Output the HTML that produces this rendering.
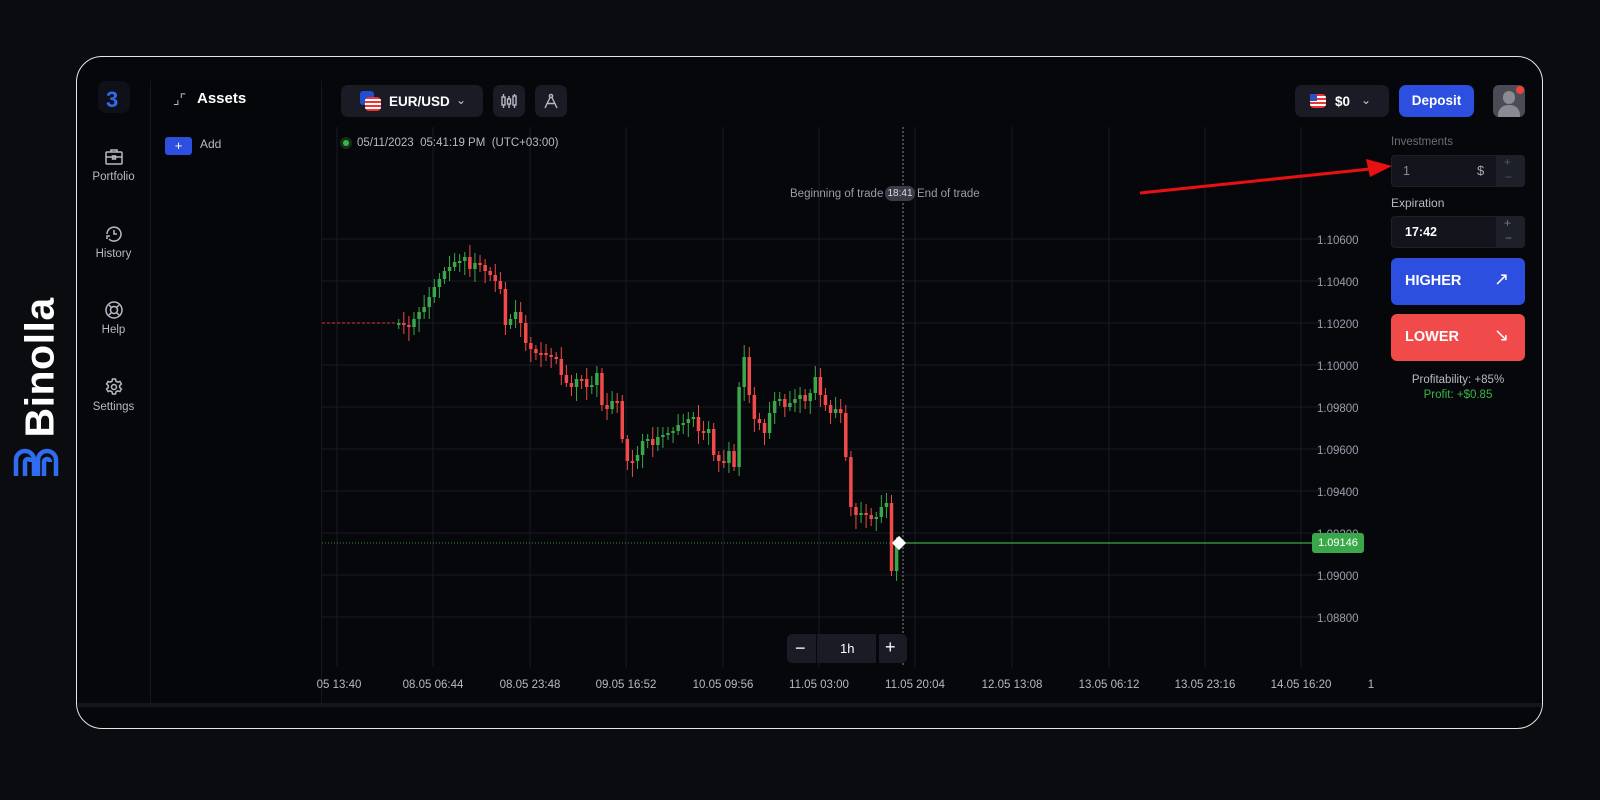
<!DOCTYPE html>
<html><head><meta charset="utf-8"><style>
*{margin:0;padding:0;box-sizing:border-box}
body{width:1600px;height:800px;background:#0b0c10;font-family:"Liberation Sans",sans-serif;color:#c9ccd6;position:relative;overflow:hidden}
.frame{position:absolute;left:76px;top:56px;width:1467px;height:673px;border:1.5px solid #e6e6e6;border-radius:26px;background:#06070b;overflow:hidden}
.abs{position:absolute}
.side{left:0;top:0;width:73px;height:100%;}
.nav{position:absolute;left:0;width:73px;text-align:center;font-size:11.5px;color:#b7bac4}
.nav svg{display:block;margin:0 auto 4px}
.btn{background:#1a1b24;border-radius:7px}
.grid{stroke:#181a24;stroke-width:1}
.yl{position:absolute;left:1240px;font-size:11.5px;color:#9a9da8}
.xl{position:absolute;top:622px;font-size:11.5px;color:#b7bac4;transform:translateX(-50%);white-space:nowrap}
</style></head><body>
<div class="abs" style="left:20px;top:300px;width:40px;height:140px;">
<div style="position:absolute;left:-48px;top:46px;width:136px;transform:rotate(-90deg);font-size:41px;font-weight:bold;color:#fff;letter-spacing:0.5px">Binolla</div>
</div>
<svg class="abs" style="left:12px;top:446px" width="48" height="32" viewBox="0 0 48 32"><path d="M4 30V14a9 9 0 0 1 18 0v16M13 30V16a3 3 0 0 1 6 0M26 30V14a9 9 0 0 1 18 0v16M32 30V16a3 3 0 0 1 6 0" fill="none" stroke="#2f6cf0" stroke-width="4.5"/></svg>

<div class="frame">
 <div class="abs side">
  <div class="abs" style="left:21px;top:24px;width:32px;height:32px;border-radius:8px;background:#0f1018"></div>
  <div class="abs" style="left:29px;top:30px;font-size:22px;font-weight:bold;color:#2f6cf0">3</div>
  <div class="nav" style="top:90px"><svg width="20" height="20" viewBox="0 0 20 20" fill="none" stroke="#b7bac4" stroke-width="1.5"><rect x="2" y="5" width="16" height="12" rx="1"/><path d="M7 5V3h6v2M2 10h16"/><rect x="8.5" y="9" width="3" height="3"/></svg>Portfolio</div>
  <div class="nav" style="top:167px"><svg width="20" height="20" viewBox="0 0 20 20" fill="none" stroke="#b7bac4" stroke-width="1.5"><path d="M3 10a7 7 0 1 1 2 5M3 15v-3h3"/><path d="M10 6v4h3"/></svg>History</div>
  <div class="nav" style="top:243px"><svg width="20" height="20" viewBox="0 0 20 20" fill="none" stroke="#b7bac4" stroke-width="1.5"><circle cx="10" cy="10" r="8"/><circle cx="10" cy="10" r="3.5"/><path d="M5 5l2.5 2.5M15 5l-2.5 2.5M5 15l2.5-2.5M15 15l-2.5-2.5"/></svg>Help</div>
  <div class="nav" style="top:320px"><svg width="20" height="20" viewBox="0 0 20 20" fill="none" stroke="#b7bac4" stroke-width="1.5"><path d="M8.5 2h3l.5 2.2 1.8 1 2.1-.8 1.5 2.6-1.7 1.5v2l1.7 1.5-1.5 2.6-2.1-.8-1.8 1-.5 2.2h-3l-.5-2.2-1.8-1-2.1.8-1.5-2.6 1.7-1.5v-2L2.6 7l1.5-2.6 2.1.8 1.8-1z"/><circle cx="10" cy="10" r="2.5"/></svg>Settings</div>
 </div>
 <div class="abs" style="left:73px;top:24px;width:1px;height:625px;background:#15161e"></div>
 <div class="abs" style="left:74px;top:24px;width:170px;height:625px;background:#050609"></div>
 <div class="abs" style="left:96px;top:34px;color:#b7bac4;font-size:14px">⌟⌜</div>
 <div class="abs" style="left:120px;top:33px;font-size:15px;font-weight:bold;color:#fff">Assets</div>
 <div class="abs" style="left:88px;top:80px;width:27px;height:18px;border-radius:3px;background:#2d4fe0;color:#fff;text-align:center;font-size:13px;line-height:18px">+</div>
 <div class="abs" style="left:123px;top:80px;font-size:12px;color:#b7bac4">Add</div>
 <div class="abs" style="left:244px;top:24px;width:1px;height:625px;background:#15161e"></div>

 <svg class="abs" style="left:0;top:0" width="1467" height="673" id="ch">
  <g class="grid">
   <line x1="260" y1="70" x2="260" y2="610"/>
   <line x1="356" y1="70" x2="356" y2="610"/><line x1="453" y1="70" x2="453" y2="610"/><line x1="549" y1="70" x2="549" y2="610"/><line x1="646" y1="70" x2="646" y2="610"/><line x1="742" y1="70" x2="742" y2="610"/><line x1="838" y1="70" x2="838" y2="610"/><line x1="935" y1="70" x2="935" y2="610"/><line x1="1032" y1="70" x2="1032" y2="610"/><line x1="1128" y1="70" x2="1128" y2="610"/><line x1="1224" y1="70" x2="1224" y2="610"/>
   <line x1="245" y1="182" x2="1280" y2="182"/><line x1="245" y1="224" x2="1280" y2="224"/><line x1="245" y1="266" x2="1280" y2="266"/><line x1="245" y1="308" x2="1280" y2="308"/><line x1="245" y1="350" x2="1280" y2="350"/><line x1="245" y1="392" x2="1280" y2="392"/><line x1="245" y1="434" x2="1280" y2="434"/><line x1="245" y1="476" x2="1280" y2="476"/><line x1="245" y1="518" x2="1280" y2="518"/><line x1="245" y1="560" x2="1280" y2="560"/>
  </g>
  <line x1="245" y1="266" x2="320" y2="266" stroke="#d33" stroke-dasharray="3 2"/>
  <line x1="245" y1="486" x2="822" y2="486" stroke="#3a8a3a" stroke-dasharray="1 2"/>
  <line x1="822" y1="486" x2="1240" y2="486" stroke="#3aa84a" stroke-width="1.2"/>
  <line x1="826" y1="70" x2="826" y2="610" stroke="#888" stroke-dasharray="2 2"/>
  <g id="cd"></g>
  <rect x="817" y="481" width="10" height="10" fill="#fff" transform="rotate(45 822 486)"/>
  <rect x="0" y="646" width="1467" height="4" fill="#14151d"/>
 </svg>
 <div class="abs" style="left:808px;top:129px;width:30px;height:15px;border-radius:7px;background:#3a3c48;font-size:10px;color:#ddd;text-align:center;line-height:15px">18:41</div>
 <div class="abs" style="left:713px;top:131px;font-size:11.5px;color:#9a9da8">Beginning of trade</div>
 <div class="abs" style="left:840px;top:131px;font-size:11.5px;color:#9a9da8">End of trade</div>
 <div class="abs" style="left:266px;top:80px;font-size:11.5px;color:#b7bac4"><span style="display:inline-block;width:6px;height:6px;border-radius:3px;background:#3ab54a;margin-right:8px;box-shadow:0 0 0 3px #12301a"></span>05/11/2023&nbsp; 05:41:19 PM&nbsp; (UTC+03:00)</div>
 <div class="yl" style="top:178px">1.10600</div><div class="yl" style="top:220px">1.10400</div><div class="yl" style="top:262px">1.10200</div><div class="yl" style="top:304px">1.10000</div><div class="yl" style="top:346px">1.09800</div><div class="yl" style="top:388px">1.09600</div><div class="yl" style="top:430px">1.09400</div><div class="yl" style="top:472px">1.09200</div><div class="yl" style="top:514px">1.09000</div><div class="yl" style="top:556px">1.08800</div>
 <div class="abs" style="left:1235px;top:476px;width:52px;height:20px;border-radius:3px;background:#3aa84a;color:#fff;font-size:11px;text-align:center;line-height:20px">1.09146</div>
 <div class="xl" style="left:262px">05 13:40</div><div class="xl" style="left:356px">08.05 06:44</div><div class="xl" style="left:453px">08.05 23:48</div><div class="xl" style="left:549px">09.05 16:52</div><div class="xl" style="left:646px">10.05 09:56</div><div class="xl" style="left:742px">11.05 03:00</div><div class="xl" style="left:838px">11.05 20:04</div><div class="xl" style="left:935px">12.05 13:08</div><div class="xl" style="left:1032px">13.05 06:12</div><div class="xl" style="left:1128px">13.05 23:16</div><div class="xl" style="left:1224px">14.05 16:20</div><div class="xl" style="left:1294px">1</div>
 <div class="abs btn" style="left:710px;top:577px;width:120px;height:29px;border-radius:5px"></div>
 <div class="abs" style="left:739px;top:577px;width:1px;height:29px;background:#06070b"></div>
 <div class="abs" style="left:799px;top:577px;width:3px;height:29px;background:#06070b"></div>
 <div class="abs" style="left:718px;top:581px;font-size:18px;color:#fff">−</div>
 <div class="abs" style="left:763px;top:584px;font-size:13px;color:#fff">1h</div>
 <div class="abs" style="left:808px;top:580px;font-size:18px;color:#fff">+</div>

 <div class="abs btn" style="left:264px;top:28px;width:142px;height:32px"></div>
 <div class="abs" style="left:283px;top:34px;width:14px;height:14px;border-radius:3px;background:#1f4fd0"></div>
 <div class="abs" style="left:288px;top:40px;width:16px;height:14px;border-radius:4px;background:repeating-linear-gradient(#e33 0 2px,#fff 2px 4px)"></div>
 <div class="abs" style="left:312px;top:37px;font-size:13.5px;font-weight:bold;color:#fff">EUR/USD</div>
 <div class="abs" style="left:379px;top:36px;font-size:12px;color:#ccc">⌄</div>
 <div class="abs btn" style="left:416px;top:28px;width:32px;height:32px"></div>
 <svg class="abs" style="left:423px;top:35px" width="18" height="18" viewBox="0 0 18 18" fill="none" stroke="#b7bac4" stroke-width="1.4"><rect x="2" y="5" width="3" height="8"/><rect x="7.5" y="7" width="3" height="5"/><rect x="13" y="4" width="3" height="9"/><path d="M3.5 2v3M3.5 13v3M9 4v3M9 12v4M14.5 2v2M14.5 13v3"/></svg>
 <div class="abs btn" style="left:458px;top:28px;width:32px;height:32px"></div>
 <svg class="abs" style="left:465px;top:35px" width="18" height="18" viewBox="0 0 18 18" fill="none" stroke="#b7bac4" stroke-width="1.4"><circle cx="9" cy="4" r="1.6"/><path d="M8 5.5L3 16M10 5.5L15 16M4.5 11.5h9"/></svg>
 <div class="abs btn" style="left:1218px;top:28px;width:94px;height:32px"></div>
 <div class="abs" style="left:1233px;top:37px;width:16px;height:14px;border-radius:4px;background:repeating-linear-gradient(#e33 0 2px,#fff 2px 4px)"></div>
 <div class="abs" style="left:1233px;top:37px;width:7px;height:7px;background:#3050c0"></div>
 <div class="abs" style="left:1258px;top:37px;font-size:13.5px;font-weight:bold;color:#fff">$0</div>
 <div class="abs" style="left:1284px;top:36px;font-size:12px;color:#ccc">⌄</div>
 <div class="abs" style="left:1322px;top:28px;width:75px;height:32px;border-radius:7px;background:#2d4fe0;color:#fff;font-size:13.5px;font-weight:bold;text-align:center;line-height:32px">Deposit</div>
 <div class="abs" style="left:1416px;top:28px;width:32px;height:32px;border-radius:6px;background:#4a4b55;overflow:hidden"><div style="position:absolute;left:10px;top:6px;width:12px;height:13px;border-radius:6px;background:#8a8b92"></div><div style="position:absolute;left:5px;top:20px;width:22px;height:14px;border-radius:10px 10px 0 0;background:#8a8b92"></div></div>
 <div class="abs" style="left:1439px;top:29px;width:8px;height:8px;border-radius:4px;background:#f04040"></div>

 <div class="abs" style="left:1314px;top:79px;font-size:11.5px;color:#6a6d78">Investments</div>
 <div class="abs" style="left:1314px;top:98px;width:134px;height:32px;border-radius:4px;background:#13141c;border:1px solid #1e2029"></div>
 <div class="abs" style="left:1419px;top:98px;width:29px;height:32px;background:#1e2029;border-radius:0 4px 4px 0"></div>
 <div class="abs" style="left:1427px;top:98px;font-size:12px;color:#555">+</div><div class="abs" style="left:1428px;top:113px;font-size:12px;color:#555">−</div>
 <div class="abs" style="left:1326px;top:107px;font-size:12.5px;color:#8a8d98">1</div>
 <div class="abs" style="left:1400px;top:106px;font-size:13px;color:#aaa">$</div>
 <div class="abs" style="left:1314px;top:139px;font-size:12px;color:#b7bac4">Expiration</div>
 <div class="abs" style="left:1314px;top:159px;width:134px;height:32px;border-radius:4px;background:#13141c;border:1px solid #1e2029"></div>
 <div class="abs" style="left:1419px;top:159px;width:29px;height:32px;background:#1e2029;border-radius:0 4px 4px 0"></div>
 <div class="abs" style="left:1427px;top:159px;font-size:12px;color:#777">+</div><div class="abs" style="left:1428px;top:174px;font-size:12px;color:#777">−</div>
 <div class="abs" style="left:1328px;top:168px;font-size:12.5px;font-weight:bold;color:#fff">17:42</div>
 <div class="abs" style="left:1314px;top:201px;width:134px;height:47px;border-radius:6px;background:#2d4fe0"></div>
 <div class="abs" style="left:1328px;top:216px;font-size:14.5px;font-weight:bold;color:#fff">HIGHER</div>
 <div class="abs" style="left:1417px;top:212px;font-size:18px;color:#fff">↗</div>
 <div class="abs" style="left:1314px;top:257px;width:134px;height:47px;border-radius:6px;background:#f04a4a"></div>
 <div class="abs" style="left:1328px;top:272px;font-size:14.5px;font-weight:bold;color:#fff">LOWER</div>
 <div class="abs" style="left:1417px;top:268px;font-size:18px;color:#fff">↘</div>
 <div class="abs" style="left:1314px;top:317px;width:134px;text-align:center;font-size:11.5px;color:#b7bac4">Profitability: +85%</div>
 <div class="abs" style="left:1314px;top:332px;width:134px;text-align:center;font-size:11.5px;color:#3ab54a">Profit: +$0.85</div>
</div>
<svg class="abs" style="left:1130px;top:155px" width="280" height="50"><path d="M10 38L240 14" stroke="#e81010" stroke-width="3"/><path d="M262 11L236 4L240 22Z" fill="#e81010"/></svg>
<script>
var ys=[266,268,270,262,255,250,240,230,222,214,210,205,204,200,212,206,208,214,218,224,232,268,262,255,266,286,292,296,296,298,300,302,318,326,330,322,322,330,328,316,348,352,344,344,382,404,404,398,384,382,388,380,378,376,374,368,366,362,360,374,376,372,398,404,406,394,410,330,300,338,362,366,376,356,344,342,350,346,342,338,344,336,320,338,348,356,352,356,400,450,458,456,458,462,460,450,446,514,486];
var g='',x=320,dx=5.08,o=ys[0]+2;
for(var i=0;i<ys.length;i++){var c=ys[i];var up=c<o;var col=up?'#3aa84a':'#f04a4a';var t=Math.min(o,c),b=Math.max(o,c);if(b-t<2)b=t+2;
var hi=t-4-((i*7)%9),lo=b+4+((i*5)%11);
g+='<line x1="'+(x+1.75)+'" y1="'+hi+'" x2="'+(x+1.75)+'" y2="'+lo+'" stroke="'+col+'" stroke-width="1"/><rect x="'+x+'" y="'+t+'" width="3.5" height="'+(b-t)+'" fill="'+col+'"/>';
o=c;x+=dx;}
document.getElementById('cd').innerHTML=g;
</script>
</body></html>
